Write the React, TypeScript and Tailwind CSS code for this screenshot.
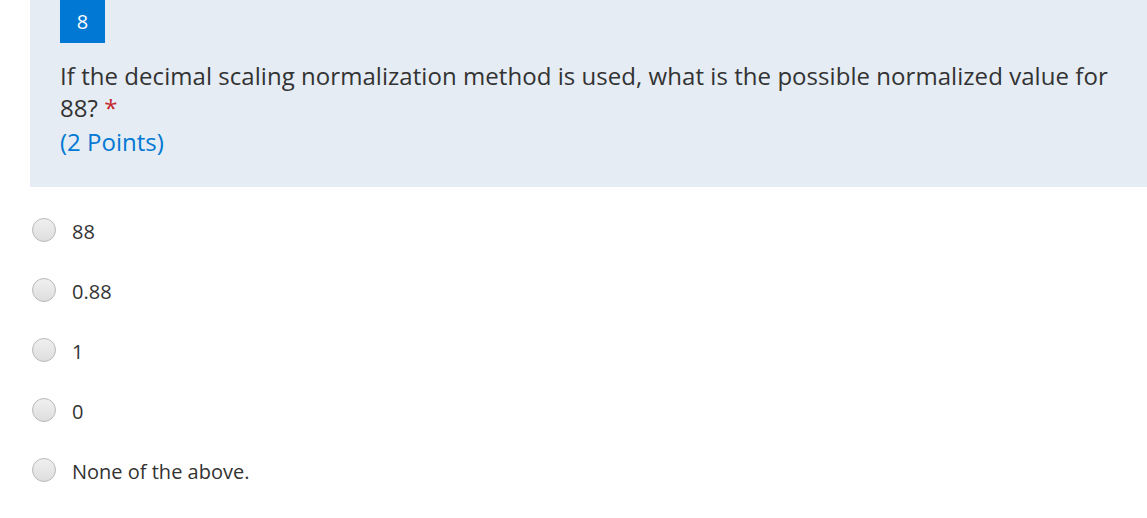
import React from "react";

const options = ["88", "0.88", "1", "0", "None of the above."];

export default function App() {
  return (
    <div
      className="w-[1147px] h-[518px] bg-white overflow-hidden"
      style={{ fontFamily: '"Open Sans", "Noto Sans", sans-serif' }}
    >
      <div className="ml-[30px] h-[187px] bg-[#e5ecf3] pl-[30px] pr-[25px]">
        <div className="w-[45px] h-[43px] bg-[#0078d4] text-white text-[20px] flex items-center justify-center">
          8
        </div>
        <div className="mt-[17px] text-[24px] leading-[32px] text-[#333333] tracking-[0.05px]">
          If the decimal scaling normalization method is used, what is the possible normalized value for 88?{" "}
          <span className="text-[#c4262e]">*</span>
        </div>
        <div className="text-[24px] leading-[32px] text-[#0078d4] mt-[2px]">(2 Points)</div>
      </div>
      <div className="pt-[31px] pl-[32px] flex flex-col gap-[36px]">
        {options.map((o) => (
          <div key={o} className="flex items-center h-[24px]">
            <div className="w-[24px] h-[24px] rounded-full border border-[#b8b8b8] bg-gradient-to-b from-[#f0f0f0] to-[#dedede]" />
            <span className="ml-[16px] text-[20px] leading-[24px] mt-[4px] text-[#333333]">{o}</span>
          </div>
        ))}
      </div>
    </div>
  );
}
